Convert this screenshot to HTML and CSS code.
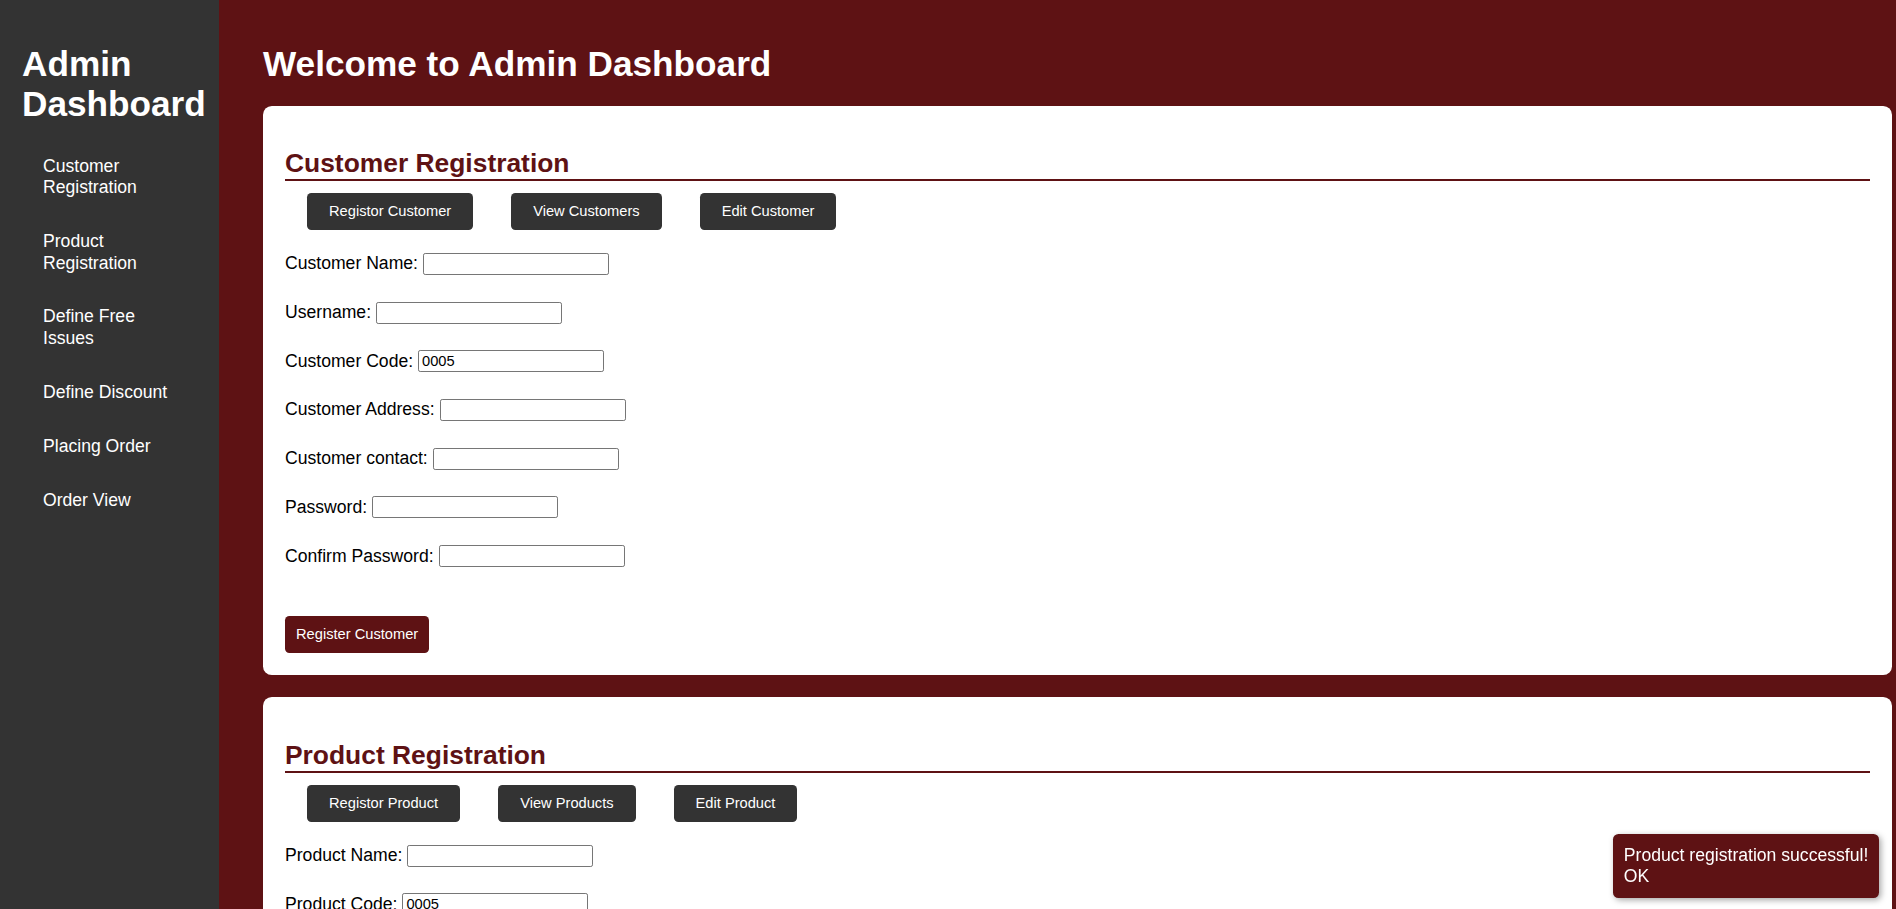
FILE: index.html
```html
<!DOCTYPE html>
<html lang="en">

<head>
    <meta charset="UTF-8">
    <meta name="viewport" content="width=device-width, initial-scale=1.0">
    <title>Admin Dashboard</title>
    <link rel="stylesheet" href="styles.css">
</head>

<body>
    <aside class="sidebar">
        <h1>Admin Dashboard</h1>
        <ul class="nav">
            <li><a href="#customer">Customer Registration</a></li>
            <li><a href="#product">Product Registration</a></li>
            <li><a href="#free">Define Free Issues</a></li>
            <li><a href="#discount">Define Discount</a></li>
            <li><a href="#order">Placing Order</a></li>
            <li><a href="#view">Order View</a></li>
        </ul>
    </aside>

    <main class="content">
        <h1 class="title">Welcome to Admin Dashboard</h1>

        <section class="card" id="customer">
            <h2>Customer Registration</h2>
            <div class="tabs">
                <button class="tab">Registor Customer</button>
                <button class="tab">View Customers</button>
                <button class="tab">Edit Customer</button>
            </div>
            <form>
                <div class="field"><label>Customer Name:</label><input type="text"></div>
                <div class="field"><label>Username:</label><input type="text"></div>
                <div class="field"><label>Customer Code:</label><input type="text" value="0005"></div>
                <div class="field"><label>Customer Address:</label><input type="text"></div>
                <div class="field"><label>Customer contact:</label><input type="text"></div>
                <div class="field"><label>Password:</label><input type="password"></div>
                <div class="field"><label>Confirm Password:</label><input type="password"></div>
                <button type="button" class="submit">Register Customer</button>
            </form>
        </section>

        <section class="card" id="product">
            <h2>Product Registration</h2>
            <div class="tabs">
                <button class="tab">Registor Product</button>
                <button class="tab">View Products</button>
                <button class="tab">Edit Product</button>
            </div>
            <form>
                <div class="field"><label>Product Name:</label><input type="text"></div>
                <div class="field"><label>Product Code:</label><input type="text" value="0005"></div>
                <div class="field"><label>Product Price:</label><input type="text"></div>
                <button type="button" class="submit">Register Product</button>
            </form>
        </section>
    </main>

    <div class="toast">
        Product registration successful!
        <button class="toast-ok">OK</button>
    </div>
</body>

</html>
```

FILE: styles.css
```css
* {
    box-sizing: border-box;
}

body {
    margin: 0;
    display: flex;
    font-family: "Liberation Sans", Arial, sans-serif;
    background-color: #5e1214;
}

.sidebar {
    width: 219px;
    flex-shrink: 0;
    min-height: 100vh;
    padding: 0 22px;
    background-color: #333;
    color: #fff;
}

.sidebar h1 {
    font-size: 35.2px;
    margin: 43.5px 0 16px;
}

.nav {
    list-style: none;
    margin: 0;
    padding: 0;
}

.nav a {
    display: block;
    padding: 16.2px 10px 16.2px 21px;
    font-size: 17.6px;
    line-height: 21.5px;
    color: #fff;
    text-decoration: none;
}

.content {
    flex: 1;
    padding: 0 4.3px 0 44px;
}

.title {
    font-size: 35.2px;
    color: #fff;
    margin: 43.5px 0 22px;
}

.card {
    background-color: #fff;
    border-radius: 8.8px;
    padding: 22px;
    margin-bottom: 22px;
}

.card h2 {
    font-size: 26.4px;
    color: #5e1214;
    margin: 20.7px 0 12px;
    border-bottom: 2.2px solid #5e1214;
}

.tabs {
    display: flex;
    gap: 38px;
    padding-left: 22px;
    margin-bottom: 22.7px;
}

.tab {
    background-color: #333;
    color: #fff;
    border: none;
    border-radius: 4.4px;
    padding: 10px 22px;
    font-family: inherit;
    font-size: 14.67px;
    line-height: 17px;
}

.field {
    display: flex;
    align-items: center;
    gap: 4.9px;
    height: 22px;
    margin-bottom: 26.7px;
    font-size: 17.6px;
    color: #000;
}

.field input {
    width: 186px;
    height: 22px;
    border: 1px solid #767676;
    border-radius: 2.2px;
    padding: 1px 3px;
    font-family: inherit;
    font-size: 14.67px;
}

.submit {
    margin-top: 22px;
    background-color: #5e1214;
    color: #fff;
    border: none;
    border-radius: 4.4px;
    padding: 10px 11px;
    font-family: inherit;
    font-size: 14.67px;
    line-height: 17.7px;
}

.toast {
    position: fixed;
    right: 16.7px;
    bottom: 10.7px;
    padding: 11px;
    border-radius: 5.5px;
    background-color: #5e1214;
    color: #fff;
    font-size: 17.6px;
    box-shadow: 2px 2px 6px rgba(0, 0, 0, 0.35);
}

.toast-ok {
    display: block;
    padding: 0;
    border: none;
    background: none;
    color: inherit;
    font: inherit;
}
```
